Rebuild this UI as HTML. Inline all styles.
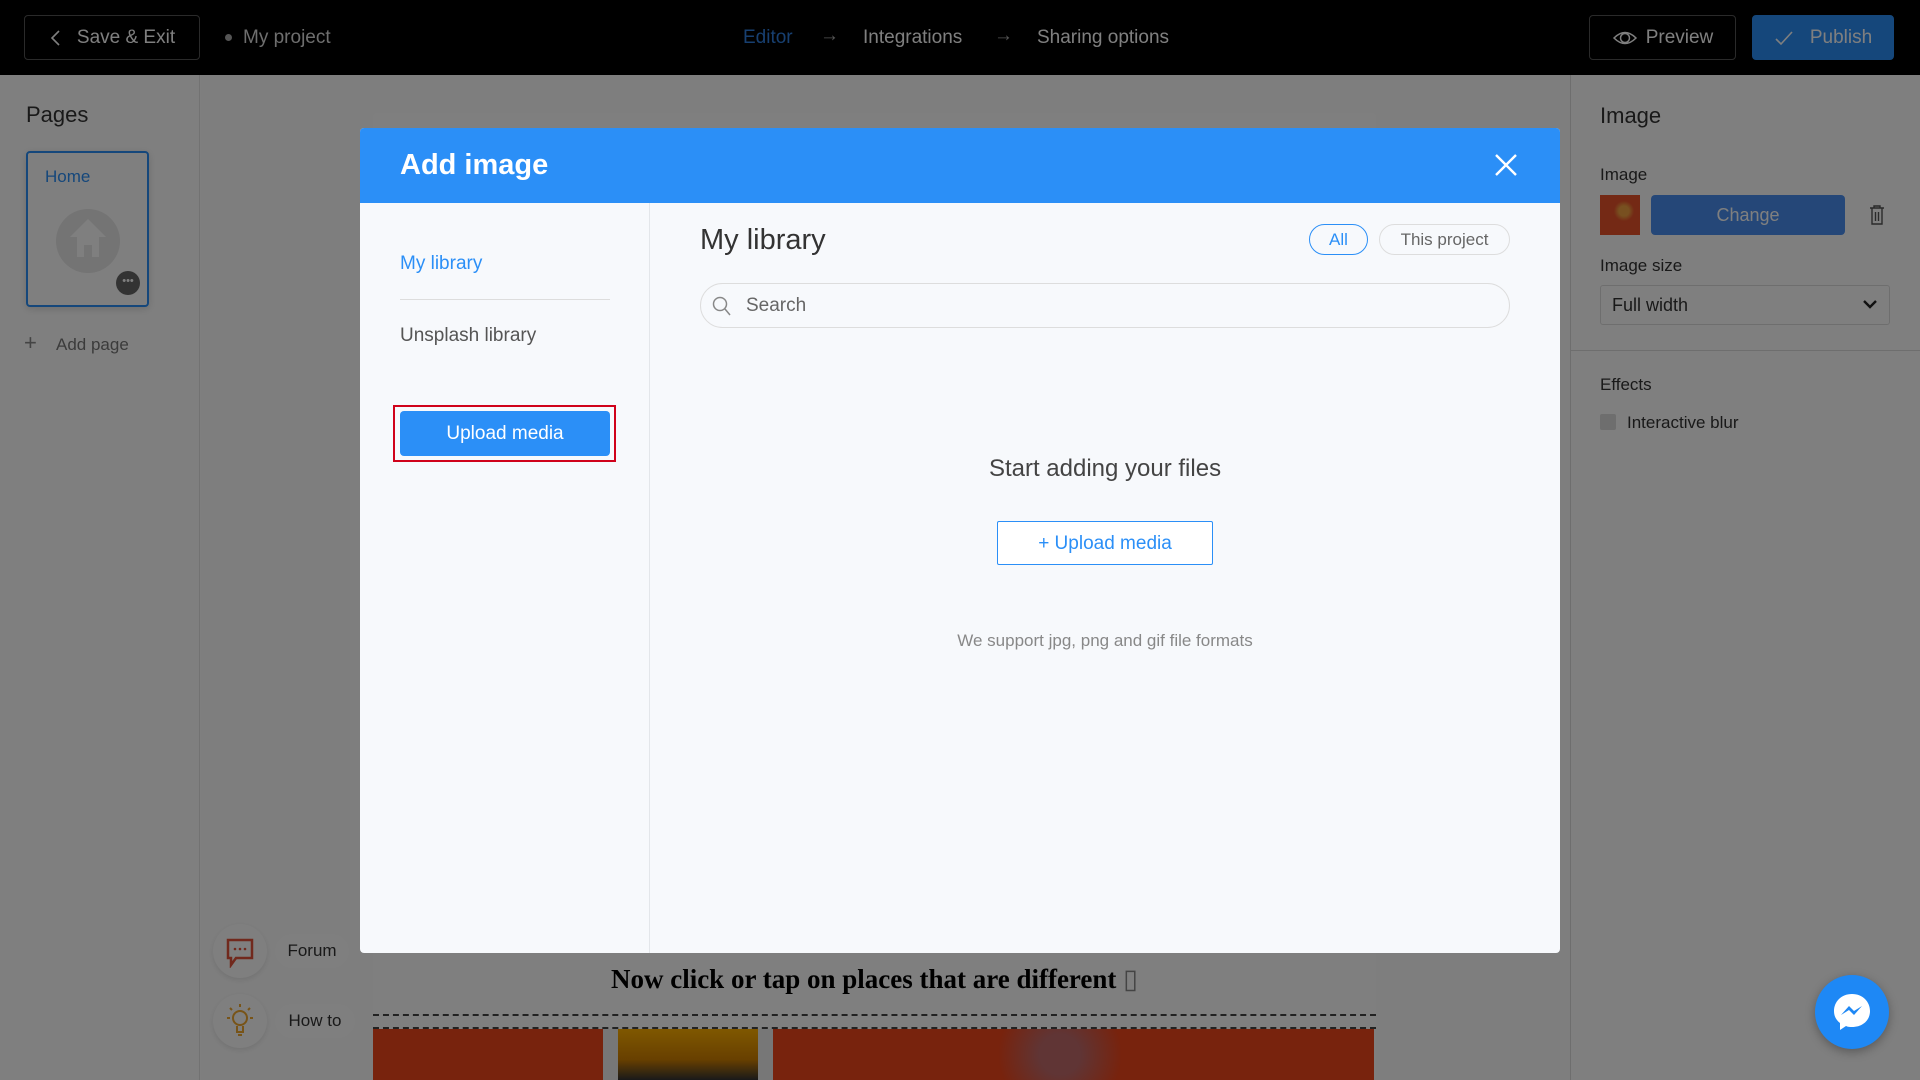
<!DOCTYPE html>
<html><head><meta charset="utf-8"><style>
*{box-sizing:border-box;margin:0;padding:0}
body{width:1920px;height:1080px;overflow:hidden;font-family:"Liberation Sans",sans-serif;background:#fff;position:relative;color:#333}
.abs{position:absolute}
#hdr{left:0;top:0;width:1920px;height:75px;background:#000;color:#fff}
.btn{position:absolute;border:1px solid #555;border-radius:4px;color:#fff;font-size:19px;display:flex;align-items:center;justify-content:center}
#overlay{left:0;top:75px;width:1920px;height:1005px;background:rgba(0,0,0,0.5)}
#hov{left:0;top:0;width:1920px;height:75px;background:rgba(0,0,0,0.5)}
</style></head><body>
<div id="hdr" class="abs">
  <div class="btn" style="left:24px;top:15px;width:176px;height:45px"><svg width="14" height="20" style="margin-right:14px"><path d="M10 3 L3 10 L10 17" stroke="#fff" stroke-width="1.6" fill="none"/></svg>Save &amp; Exit</div>
  <div class="abs" style="left:225px;top:34px;width:7px;height:7px;border-radius:50%;background:#aaa"></div>
  <div class="abs" style="left:243px;top:27px;font-size:19px;color:#ddd">My project</div>
  <div class="abs" style="left:743px;top:27px;font-size:19px;color:#2f7fe0">Editor</div>
  <div class="abs" style="left:820px;top:25px;font-size:19px;color:#aaa">→</div>
  <div class="abs" style="left:863px;top:27px;font-size:19px;color:#fff">Integrations</div>
  <div class="abs" style="left:994px;top:25px;font-size:19px;color:#aaa">→</div>
  <div class="abs" style="left:1037px;top:27px;font-size:19px;color:#fff">Sharing options</div>
  <div class="btn" style="left:1589px;top:15px;width:147px;height:45px"><svg width="26" height="18" style="margin-right:8px"><path d="M2 9 Q13 -2 24 9 Q13 20 2 9Z" stroke="#fff" stroke-width="1.5" fill="none"/><circle cx="13" cy="9" r="4.5" stroke="#fff" stroke-width="1.5" fill="none"/></svg>Preview</div>
  <div class="btn" style="left:1752px;top:15px;width:142px;height:45px;background:#2b8ff7;border-color:#2b8ff7"><svg width="20" height="18" style="margin-right:16px"><path d="M2 10 L7 15 L18 3" stroke="#fff" stroke-width="1.6" fill="none"/></svg>Publish</div>
</div>
<div id="hov" class="abs"></div>

<div class="abs" style="left:0;top:75px;width:200px;height:1005px;background:#fff;border-right:1px solid #e5e5e5"></div>
<div class="abs" style="left:26px;top:102px;font-size:22px;color:#333">Pages</div>
<div class="abs" style="left:26px;top:151px;width:123px;height:156px;border:2px solid #2b8ff7;border-radius:4px;background:#fff;box-shadow:0 2px 8px rgba(0,0,0,.15)">
  <div class="abs" style="left:17px;top:14px;font-size:17px;color:#2b8ff7">Home</div>
  <div class="abs" style="left:28px;top:56px;width:64px;height:64px;border-radius:50%;background:#e8e8e8"></div>
  <svg class="abs" style="left:38px;top:62px" width="44" height="46"><path d="M22 4 L40 22 H33 V42 H26 V30 H18 V42 H11 V22 H4Z" fill="#fff"/></svg>
  <div class="abs" style="left:88px;top:118px;width:24px;height:24px;border-radius:50%;background:#666;color:#fff;font-size:11px;text-align:center;line-height:20px">•••</div>
</div>
<div class="abs" style="left:24px;top:330px;font-size:22px;color:#888">+</div>
<div class="abs" style="left:56px;top:335px;font-size:17px;color:#777">Add page</div>

<div class="abs" style="left:201px;top:75px;width:1369px;height:1005px;background:#fdfdfd"></div>
<div class="abs" style="left:373px;top:113px;width:1003px;height:967px;background:#fff;border-radius:4px"></div>
<div class="abs" style="left:373px;top:964px;width:1003px;text-align:center;font-family:'Liberation Serif',serif;font-weight:bold;font-size:27px;color:#000">Now click or tap on places that are different <span style="font-weight:normal;color:#888">▯</span></div>
<div class="abs" style="left:373px;top:1014px;width:1003px;border-top:2px dashed #444"></div>
<div class="abs" style="left:373px;top:1027px;width:1003px;border-top:2px dashed #444"></div>
<div class="abs" style="left:373px;top:1029px;width:1001px;height:51px;background:#f0461a"></div>
<div class="abs" style="left:603px;top:1029px;width:170px;height:51px;background:#eee"></div>
<div class="abs" style="left:618px;top:1029px;width:140px;height:51px;background:linear-gradient(#ffb000,#d08000 60%,#333)"></div>
<div class="abs" style="left:960px;top:1029px;width:200px;height:51px;background:radial-gradient(circle,#c06a6a 0 20%,transparent 60%)"></div>
<div class="abs" style="left:213px;top:924px;width:54px;height:54px;border-radius:50%;background:#fff;box-shadow:0 2px 6px rgba(0,0,0,.1)"></div>
<svg class="abs" style="left:226px;top:938px" width="28" height="30"><path d="M2 2 H26 V20 H10 L5 27 V20 H2Z" stroke="#e2533a" stroke-width="2.5" fill="none"/><circle cx="9" cy="11" r="1.3" fill="#e2533a"/><circle cx="14" cy="11" r="1.3" fill="#e2533a"/><circle cx="19" cy="11" r="1.3" fill="#e2533a"/></svg>
<div class="abs" style="left:275px;top:934px;width:74px;height:34px;border-radius:17px;background:#fff;font-size:17px;line-height:34px;text-align:center">Forum</div>
<div class="abs" style="left:213px;top:994px;width:54px;height:54px;border-radius:50%;background:#fff;box-shadow:0 2px 6px rgba(0,0,0,.1)"></div>
<svg class="abs" style="left:222px;top:1002px" width="36" height="38"><circle cx="18" cy="16" r="7" stroke="#f0a830" stroke-width="2" fill="none"/><path d="M15 24 V30 H21 V24 M16 33 H20 M18 2 V5 M5 16 H8 M28 16 H31 M8 6 L10 8 M28 6 L26 8" stroke="#f0a830" stroke-width="2" fill="none"/></svg>
<div class="abs" style="left:275px;top:1004px;width:80px;height:34px;border-radius:17px;background:#fff;font-size:17px;line-height:34px;text-align:center">How to</div>

<div class="abs" style="left:1570px;top:75px;width:350px;height:1005px;background:#fff;border-left:1px solid #ddd"></div>
<div class="abs" style="left:1600px;top:103px;font-size:22px;color:#333">Image</div>
<div class="abs" style="left:1600px;top:165px;font-size:17px;color:#333">Image</div>
<div class="abs" style="left:1600px;top:195px;width:40px;height:40px;background:radial-gradient(circle at 60% 40%,#f0a040 0 15%,#e8522b 30%)"></div>
<div class="abs" style="left:1651px;top:195px;width:194px;height:40px;border-radius:4px;background:#4a8ff0;color:#fff;font-size:18px;text-align:center;line-height:40px">Change</div>
<svg class="abs" style="left:1868px;top:204px" width="18" height="22"><path d="M2 4 H16 M6 4 V2 H12 V4 M4 4 V20 H14 V4 M7.5 8 V17 M10.5 8 V17" stroke="#555" stroke-width="1.4" fill="none"/></svg>
<div class="abs" style="left:1600px;top:256px;font-size:17px;color:#333">Image size</div>
<div class="abs" style="left:1600px;top:285px;width:290px;height:40px;border:1px solid #ddd;border-radius:3px;font-size:18px;line-height:38px;padding-left:11px;color:#333">Full width</div>
<svg class="abs" style="left:1862px;top:297px" width="16" height="14"><path d="M2 4 L8 10 L14 4" stroke="#222" stroke-width="2.4" fill="none"/></svg>
<div class="abs" style="left:1571px;top:350px;width:349px;border-top:1px solid #ddd"></div>
<div class="abs" style="left:1600px;top:375px;font-size:17px;color:#333">Effects</div>
<div class="abs" style="left:1600px;top:414px;width:16px;height:16px;background:#ddd;border-radius:2px"></div>
<div class="abs" style="left:1627px;top:413px;font-size:17px;color:#333">Interactive blur</div>

<div id="overlay" class="abs"></div>

<div class="abs" style="left:360px;top:128px;width:1200px;height:825px;background:#f7f9fc;border-radius:4px;overflow:hidden">
  <div class="abs" style="left:0;top:0;width:1200px;height:75px;background:#2b8ff7"></div>
  <div class="abs" style="left:40px;top:21px;font-size:29px;font-weight:bold;color:#fff">Add image</div>
  <svg class="abs" style="left:1133px;top:24px" width="26" height="26"><path d="M3 3 L23 23 M23 3 L3 23" stroke="#fff" stroke-width="2.4"/></svg>
  <div class="abs" style="left:289px;top:75px;width:1px;height:750px;background:#e3e6ea"></div>
  <div class="abs" style="left:40px;top:125px;font-size:19px;color:#2b8ff7">My library</div>
  <div class="abs" style="left:40px;top:171px;width:210px;border-top:1px solid #ddd"></div>
  <div class="abs" style="left:40px;top:197px;font-size:19px;color:#555">Unsplash library</div>
  <div class="abs" style="left:33px;top:277px;width:223px;height:57px;border:2px solid #d0021b"></div>
  <div class="abs" style="left:40px;top:283px;width:210px;height:45px;border-radius:4px;background:#2b8ff7;color:#fff;font-size:19px;text-align:center;line-height:46px">Upload media</div>
  <div class="abs" style="left:340px;top:96px;font-size:29px;color:#333">My library</div>
  <div class="abs" style="left:949px;top:96px;width:59px;height:31px;border:1.5px solid #2b8ff7;border-radius:16px;color:#2b8ff7;font-size:17px;text-align:center;line-height:30px">All</div>
  <div class="abs" style="left:1019px;top:96px;width:131px;height:31px;border:1.5px solid #ddd;border-radius:16px;color:#666;font-size:17px;text-align:center;line-height:30px">This project</div>
  <div class="abs" style="left:340px;top:155px;width:810px;height:45px;border:1.5px solid #ddd;border-radius:23px"></div>
  <svg class="abs" style="left:352px;top:168px" width="20" height="22"><circle cx="8" cy="8" r="6.5" stroke="#888" stroke-width="1.5" fill="none"/><path d="M13 13 L18 19" stroke="#888" stroke-width="1.5"/></svg>
  <div class="abs" style="left:386px;top:167px;font-size:19px;color:#666">Search</div>
  <div class="abs" style="left:340px;top:327px;width:810px;text-align:center;font-size:24px;color:#444">Start adding your files</div>
  <div class="abs" style="left:637px;top:393px;width:216px;height:44px;border:1.5px solid #2b8ff7;border-radius:2px;background:#fff;color:#2b8ff7;font-size:19px;text-align:center;line-height:43px">+ Upload media</div>
  <div class="abs" style="left:340px;top:503px;width:810px;text-align:center;font-size:17px;color:#888">We support jpg, png and gif file formats</div>
</div>

<div class="abs" style="left:1815px;top:975px;width:74px;height:74px;border-radius:50%;background:#1e88f5;box-shadow:0 3px 10px rgba(0,0,0,.3)"></div>
<svg class="abs" style="left:1831px;top:991px" width="42" height="42"><path d="M21 3 C10 3 3 11 3 20 C3 25 5 29 9 32 V39 L15 35 C17 36 19 36 21 36 C32 36 39 29 39 20 C39 11 32 3 21 3Z" fill="#fff"/><path d="M10 24 L18 15 L23 20 L31 15 L23 24 L18 19Z" fill="#1e88f5"/></svg>
</body></html>
